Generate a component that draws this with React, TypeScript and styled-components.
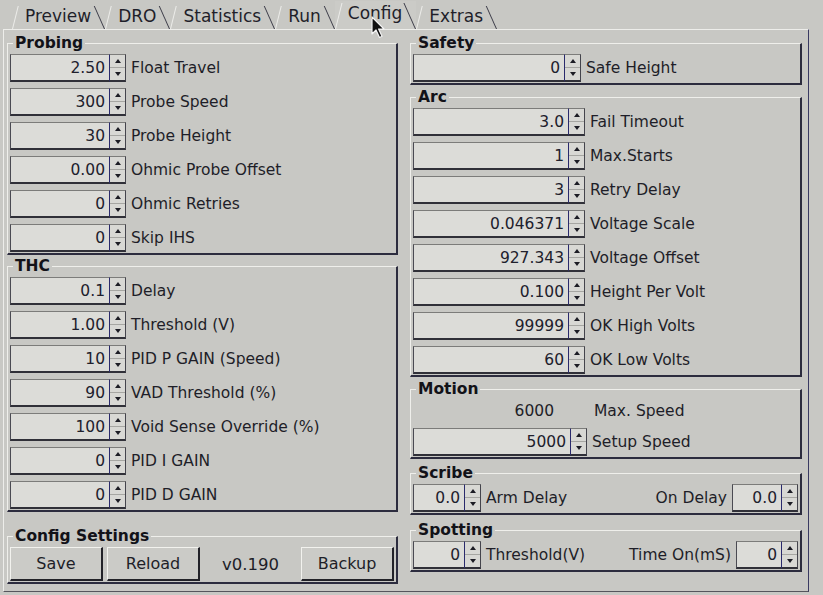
import React from 'react';
import styled, { createGlobalStyle } from 'styled-components';

type SpinRow = {
  value: string;
  label: string;
};

const probing: SpinRow[] = [
  { value: '2.50', label: 'Float Travel' },
  { value: '300', label: 'Probe Speed' },
  { value: '30', label: 'Probe Height' },
  { value: '0.00', label: 'Ohmic Probe Offset' },
  { value: '0', label: 'Ohmic Retries' },
  { value: '0', label: 'Skip IHS' },
];

const thc: SpinRow[] = [
  { value: '0.1', label: 'Delay' },
  { value: '1.00', label: 'Threshold (V)' },
  { value: '10', label: 'PID P GAIN (Speed)' },
  { value: '90', label: 'VAD Threshold (%)' },
  { value: '100', label: 'Void Sense Override (%)' },
  { value: '0', label: 'PID I GAIN' },
  { value: '0', label: 'PID D GAIN' },
];

const arc: SpinRow[] = [
  { value: '3.0', label: 'Fail Timeout' },
  { value: '1', label: 'Max.Starts' },
  { value: '3', label: 'Retry Delay' },
  { value: '0.046371', label: 'Voltage Scale' },
  { value: '927.343', label: 'Voltage Offset' },
  { value: '0.100', label: 'Height Per Volt' },
  { value: '99999', label: 'OK High Volts' },
  { value: '60', label: 'OK Low Volts' },
];

const tabs = ['Preview', 'DRO', 'Statistics', 'Run', 'Config', 'Extras'];

function SpinBox({ value, width }: { value: string; width: number }) {
  return (
    <Spin $w={width}>
      <Field>{value}</Field>
      <Arrows>
        <ArrowBtn />
        <ArrowBtn $down />
      </Arrows>
    </Spin>
  );
}

function SpinList({ rows, width }: { rows: SpinRow[]; width: number }) {
  return (
    <>
      {rows.map((r) => (
        <Row key={r.label}>
          <SpinBox value={r.value} width={width} />
          <Label>{r.label}</Label>
        </Row>
      ))}
    </>
  );
}

function App() {
  return (
    <Page>
      <GlobalStyle />
      <TabBar>
        {tabs.map((t) => (
          <Tab key={t} $active={t === 'Config'}>
            {t}
          </Tab>
        ))}
      </TabBar>

      <Pane>
        <Column>
          <Group>
            <Title>Probing</Title>
            <SpinList rows={probing} width={116} />
          </Group>
          <Group $top={3}>
            <Title>THC</Title>
            <SpinList rows={thc} width={116} />
          </Group>
          <Group $top={16}>
            <Title>Config Settings</Title>
            <ButtonRow>
              <Button>Save</Button>
              <Button>Reload</Button>
              <Version>v0.190</Version>
              <Button>Backup</Button>
            </ButtonRow>
          </Group>
        </Column>

        <Column>
          <Group>
            <Title>Safety</Title>
            <Row>
              <SpinBox value='0' width={168} />
              <Label>Safe Height</Label>
            </Row>
          </Group>
          <Group $top={4}>
            <Title>Arc</Title>
            <SpinList rows={arc} width={172} />
          </Group>
          <Group $top={4}>
            <Title>Motion</Title>
            <Row $h={22}>
              <StaticValue>6000</StaticValue>
              <Label>Max. Speed</Label>
            </Row>
            <Row>
              <SpinBox value='5000' width={174} />
              <Label>Setup Speed</Label>
            </Row>
          </Group>
          <Group $top={6}>
            <Title>Scribe</Title>
            <SplitRow>
              <Pair>
                <SpinBox value='0.0' width={68} />
                <Label>Arm Delay</Label>
              </Pair>
              <Pair>
                <Label>On Delay</Label>
                <SpinBox value='0.0' width={66} />
              </Pair>
            </SplitRow>
          </Group>
          <Group $top={7}>
            <Title>Spotting</Title>
            <SplitRow>
              <Pair>
                <SpinBox value='0' width={68} />
                <Label>Threshold(V)</Label>
              </Pair>
              <Pair>
                <Label>Time On(mS)</Label>
                <SpinBox value='0' width={62} />
              </Pair>
            </SplitRow>
          </Group>
        </Column>
      </Pane>

      {/* mouse pointer sitting over the Config tab */}
      <Cursor width='15' height='23' viewBox='0 0 15 23'>
        <path
          d='M1 1 L1 18 L5 14 L8.5 21.5 L11 20.3 L7.6 13 L13 13 Z'
          fill='#111'
          stroke='#f4f4f4'
          strokeWidth='1.2'
          strokeLinejoin='round'
        />
      </Cursor>
    </Page>
  );
}

const GlobalStyle = createGlobalStyle`
  html, body {
    margin: 0;
    padding: 0;
    background: #c8c8c4;
  }
  body {
    font-family: 'DejaVu Sans', 'Liberation Sans', sans-serif;
    color: #20202a;
  }
`;

const Page = styled.div`
  position: relative;
  width: 823px;
  height: 595px;
  overflow: hidden;
  background: #c8c8c4;
`;

const TabBar = styled.div`
  display: flex;
  align-items: flex-end;
  height: 29px;
  padding-left: 12px;
  box-sizing: border-box;
`;

const Tab = styled.div<{ $active?: boolean }>`
  position: relative;
  height: ${(p) => (p.$active ? 28 : 25)}px;
  line-height: 25px;
  padding: 0 14px 0 13px;
  font-size: 17px;
  color: #1f1f2a;
  background: ${(p) => (p.$active ? '#cbcbc7' : 'transparent')};

  &::before {
    content: '';
    position: absolute;
    left: 0;
    top: 2px;
    bottom: 0;
    border-left: 1px solid #ececea;
    transform-origin: bottom;
    transform: skewX(-14deg);
  }

  &::after {
    content: '';
    position: absolute;
    right: 0;
    top: 2px;
    bottom: 0;
    border-right: 1.5px solid #3c3c48;
    transform-origin: bottom;
    transform: skewX(24deg);
  }
`;

const Pane = styled.div`
  display: flex;
  gap: 12px;
  margin-left: 3px;
  width: 806px;
  height: 563px;
  box-sizing: border-box;
  padding: 5px 6px 0 3px;
  border-top: 1px solid #ededea;
  border-left: 1px solid #ededea;
  border-right: 1px solid #3a3a62;
  border-bottom: 1px solid #55555c;
`;

const Column = styled.div`
  display: flex;
  flex-direction: column;
  width: 391px;
  flex: none;

  & + & {
    width: 392px;
  }
`;

const Group = styled.fieldset<{ $top?: number }>`
  display: flex;
  flex-direction: column;
  gap: 6px;
  min-width: 0;
  margin: ${(p) => p.$top ?? 0}px 0 0;
  padding: 2px 2px 1px;
  border: none;
  border-top: 1px solid #efefeb;
  border-left: 1px solid #efefeb;
  border-right: 2px solid #2c2c3e;
  border-bottom: 2px solid #2c2c3e;
`;

const Title = styled.legend`
  margin-left: 3px;
  padding: 0 2px;
  font-size: 15.5px;
  line-height: 17px;
  font-weight: bold;
  color: #121218;
`;

const Row = styled.div<{ $h?: number }>`
  display: flex;
  align-items: center;
  gap: 5px;
  height: ${(p) => p.$h ?? 28}px;
  font-size: 15.5px;
`;

const SplitRow = styled(Row)`
  justify-content: space-between;
`;

const Pair = styled.div`
  display: flex;
  align-items: center;
  gap: 5px;
`;

const Label = styled.span`
  white-space: nowrap;
  color: #1e1e28;
`;

const StaticValue = styled.div`
  width: 176px;
  box-sizing: border-box;
  padding-right: 35px;
  text-align: right;
  color: #1e1e28;
`;

const Spin = styled.div<{ $w: number }>`
  display: flex;
  flex: none;
  width: ${(p) => p.$w}px;
  height: 28px;
`;

const Field = styled.div`
  flex: 1;
  display: flex;
  align-items: center;
  justify-content: flex-end;
  padding-right: 4px;
  background: #dcdcd8;
  border-top: 1px solid #7c7c7a;
  border-left: 1px solid #4a4a52;
  border-bottom: 2px solid #303038;
  font-size: 15.5px;
  color: #20202c;
`;

const Arrows = styled.div`
  display: flex;
  flex-direction: column;
  width: 15px;
  flex: none;
  background: #d8d8d4;
  border-top: 1px solid #7c7c7a;
  border-left: 1px solid #2a2a6c;
  border-right: 1px solid #44444c;
  border-bottom: 2px solid #303038;
`;

const ArrowBtn = styled.div<{ $down?: boolean }>`
  flex: 1;
  display: flex;
  align-items: center;
  justify-content: center;

  &::after {
    content: '';
    border-left: 3px solid transparent;
    border-right: 3px solid transparent;
    ${(p) => (p.$down ? 'border-top: 4px solid #1c1c24;' : 'border-bottom: 4px solid #1c1c24;')}
  }

  & + & {
    border-top: 1px solid #a6a6a2;
  }
`;

const ButtonRow = styled.div`
  display: grid;
  grid-template-columns: repeat(4, 1fr);
  gap: 4px;
  height: 34px;
`;

const Button = styled.button`
  padding: 0;
  font-family: inherit;
  font-size: 16px;
  color: #1e1e28;
  background: #cbcbc7;
  border-top: 1px solid #f2f2ee;
  border-left: 1px solid #f2f2ee;
  border-right: 2px solid #222228;
  border-bottom: 2px solid #222228;
`;

const Version = styled.div`
  display: flex;
  align-items: center;
  justify-content: center;
  font-size: 16.5px;
  color: #1e1e28;
`;

const Cursor = styled.svg`
  position: absolute;
  left: 371px;
  top: 16px;
`;

export default App;
